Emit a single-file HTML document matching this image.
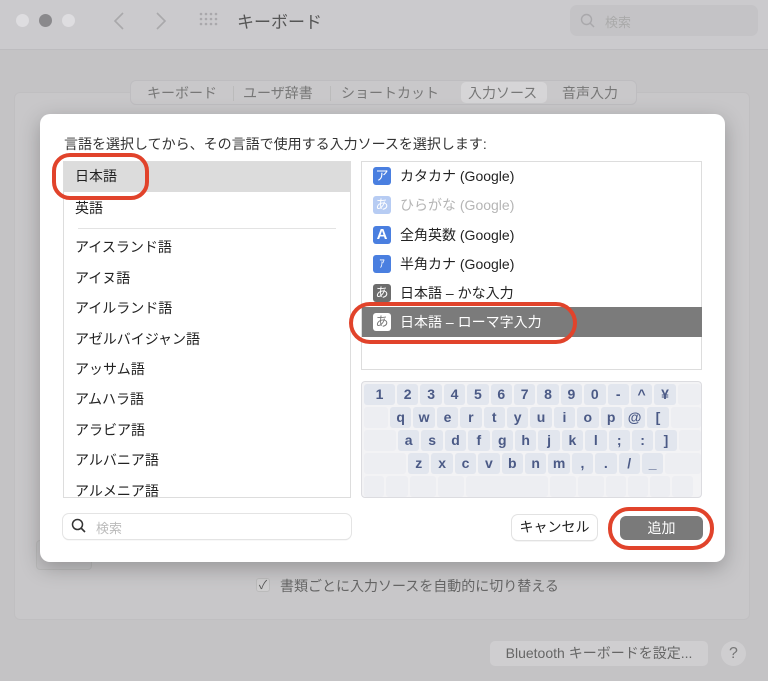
<!DOCTYPE html>
<html><head><meta charset="utf-8">
<style>
*{box-sizing:border-box;margin:0;padding:0}
body{width:768px;height:681px;overflow:hidden;position:relative;background:#c4c3c5;font-family:"Liberation Sans","Noto Sans CJK JP",sans-serif;color:#222}
.a{position:absolute}
.tl{width:13px;height:13px;border-radius:50%;top:14px}
.kb{position:absolute;left:361px;top:381px;width:341px;height:117px;background:#f3f3f5;border:1px solid #dcdce0;border-radius:4px;padding:2px}
.row{display:flex;gap:2px;height:21px;margin-bottom:2px}
.k{width:21.4px;height:21px;background:#e2e6ee;border-radius:3px;color:#4b5a86;font-weight:bold;font-size:14px;text-align:center;line-height:21px;flex:none}
.b{background:#edeef2}
.li{position:absolute;left:75px;font-size:14px;color:#222}
.ri{position:absolute;left:400px;font-size:14px;color:#222}
.ic{position:absolute;left:373px;width:18px;height:18px;border-radius:3px;color:#fff;font-size:13px;text-align:center;line-height:18px}
.ring{position:absolute;border:4px solid #e1432b;border-radius:18px}
.tab{position:absolute;top:83px;font-size:14px;color:#777}
</style></head><body>
<div class="a" style="left:0;top:0;width:768px;height:50px;background:#cbcacd;border-bottom:1px solid #bdbcbf"></div>
<div class="a tl" style="left:16px;background:#dedde0"></div>
<div class="a tl" style="left:39px;background:#8a898c"></div>
<div class="a tl" style="left:62px;background:#dedde0"></div>
<svg class="a" style="left:110px;top:10px" width="60" height="22"><path d="M13 3 L5 11 L13 19" stroke="#a9a8ab" stroke-width="1.6" fill="none"/><path d="M47 3 L55 11 L47 19" stroke="#a9a8ab" stroke-width="1.6" fill="none"/></svg>
<svg class="a" style="left:199px;top:12px" width="22" height="16" fill="#a9a8ab"><g id="g"><circle cx="2" cy="2" r="1.3"/><circle cx="7" cy="2" r="1.3"/><circle cx="12" cy="2" r="1.3"/><circle cx="17" cy="2" r="1.3"/></g><use href="#g" y="5"/><use href="#g" y="10"/></svg>
<div class="a" style="left:237px;top:8px;font-size:17px;color:#555">キーボード</div>
<div class="a" style="left:570px;top:5px;width:188px;height:31px;background:#c4c3c6;border-radius:7px"></div>
<svg class="a" style="left:580px;top:13px" width="16" height="16"><circle cx="6.5" cy="6.5" r="5" stroke="#a9a8ab" stroke-width="1.4" fill="none"/><path d="M10 10 L14 14" stroke="#a9a8ab" stroke-width="1.5"/></svg>
<div class="a" style="left:605px;top:12px;font-size:13px;color:#aaa">検索</div>
<div class="a" style="left:14px;top:92px;width:736px;height:528px;background:#c8c7c9;border-radius:6px;border:1px solid #c0bfc1"></div>
<div class="a" style="left:130px;top:80px;width:507px;height:25px;background:#c9c8ca;border-radius:6px;border:1px solid #bebdc0"></div>
<div class="a" style="left:461px;top:82px;width:86px;height:21px;background:#d6d5d7;border-radius:5px"></div>
<div class="tab" style="left:147px">キーボード</div>
<div class="a" style="left:233px;top:86px;width:1px;height:15px;background:#bbb"></div>
<div class="tab" style="left:243px">ユーザ辞書</div>
<div class="a" style="left:330px;top:86px;width:1px;height:15px;background:#bbb"></div>
<div class="tab" style="left:341px">ショートカット</div>
<div class="tab" style="left:468px">入力ソース</div>
<div class="tab" style="left:562px">音声入力</div>
<div class="a" style="left:36px;top:540px;width:56px;height:30px;background:#c4c3c5;border:1px solid #bbb;border-radius:4px"></div>
<div class="a" style="left:256px;top:578px;width:14px;height:14px;border-radius:3px;background:#cfcecf;border:1px solid #bbb;font-size:12px;line-height:12px;text-align:center;color:#555">✓</div>
<div class="a" style="left:280px;top:576px;font-size:14px;color:#666">書類ごとに入力ソースを自動的に切り替える</div>
<div class="a" style="left:490px;top:641px;width:218px;height:25px;background:#cfced0;border-radius:5px;font-size:14px;color:#666;text-align:center;line-height:25px">Bluetooth キーボードを設定...</div>
<div class="a" style="left:721px;top:641px;width:25px;height:25px;border-radius:50%;background:#cfced0;font-size:16px;color:#777;text-align:center;line-height:25px">?</div>
<div class="a" style="left:40px;top:114px;width:685px;height:448px;background:#fff;border-radius:10px;box-shadow:0 6px 20px rgba(0,0,0,.25)"></div>
<div class="a" style="left:64px;top:134px;font-size:14px;color:#333">言語を選択してから、その言語で使用する入力ソースを選択します:</div>
<div class="a" style="left:63px;top:161px;width:288px;height:337px;border:1px solid #ddd;background:#fff"></div>
<div class="a" style="left:64px;top:162px;width:286px;height:30px;background:#dcdcdc"></div>
<div class="li" style="top:166px">日本語</div>
<div class="li" style="top:198px">英語</div>
<div class="a" style="left:78px;top:228px;width:258px;height:1px;background:#e3e3e3"></div>
<div class="li" style="top:237px">アイスランド語</div>
<div class="li" style="top:268px">アイヌ語</div>
<div class="li" style="top:298px">アイルランド語</div>
<div class="li" style="top:329px">アゼルバイジャン語</div>
<div class="li" style="top:359px">アッサム語</div>
<div class="li" style="top:389px">アムハラ語</div>
<div class="li" style="top:420px">アラビア語</div>
<div class="li" style="top:450px">アルバニア語</div>
<div class="li" style="top:481px;height:16px;overflow:hidden">アルメニア語</div>
<div class="a" style="left:361px;top:161px;width:341px;height:209px;border:1px solid #ddd;background:#fff"></div>
<div class="a" style="left:362px;top:307px;width:340px;height:30px;background:#7b7b7b"></div>
<div class="ic" style="top:167px;background:#4a7fe0">ア</div><div class="ri" style="top:166px">カタカナ (Google)</div>
<div class="ic" style="top:196px;background:#b7ccf3">あ</div><div class="ri" style="top:195px;color:#b5b5b5">ひらがな (Google)</div>
<div class="ic" style="top:226px;background:#4a7fe0;font-weight:bold;font-size:15px">A</div><div class="ri" style="top:225px">全角英数 (Google)</div>
<div class="ic" style="top:255px;background:#4a7fe0;font-size:11px">ｱ</div><div class="ri" style="top:254px">半角カナ (Google)</div>
<div class="ic" style="top:284px;background:#6d6d6d">あ</div><div class="ri" style="top:283px">日本語 – かな入力</div>
<div class="ic" style="top:313px;background:#fff;color:#777">あ</div><div class="ri" style="top:312px;color:#fff">日本語 – ローマ字入力</div>
<div class="kb">
<div class="row"><div class="k" style="width:31px">1</div><div class="k">2</div><div class="k">3</div><div class="k">4</div><div class="k">5</div><div class="k">6</div><div class="k">7</div><div class="k">8</div><div class="k">9</div><div class="k">0</div><div class="k">-</div><div class="k">^</div><div class="k">¥</div><div class="k b" style="width:23px"></div></div>
<div class="row"><div class="k b" style="width:24px"></div><div class="k">q</div><div class="k">w</div><div class="k">e</div><div class="k">r</div><div class="k">t</div><div class="k">y</div><div class="k">u</div><div class="k">i</div><div class="k">o</div><div class="k">p</div><div class="k">@</div><div class="k">[</div><div class="k b" style="width:30px"></div></div>
<div class="row"><div class="k b" style="width:32px"></div><div class="k">a</div><div class="k">s</div><div class="k">d</div><div class="k">f</div><div class="k">g</div><div class="k">h</div><div class="k">j</div><div class="k">k</div><div class="k">l</div><div class="k">;</div><div class="k">:</div><div class="k">]</div><div class="k b" style="width:22px"></div></div>
<div class="row"><div class="k b" style="width:42px"></div><div class="k">z</div><div class="k">x</div><div class="k">c</div><div class="k">v</div><div class="k">b</div><div class="k">n</div><div class="k">m</div><div class="k">,</div><div class="k">.</div><div class="k">/</div><div class="k">_</div><div class="k b" style="width:36px"></div></div>
<div class="row"><div class="k b" style="width:20px"></div><div class="k b" style="width:22px"></div><div class="k b" style="width:26px"></div><div class="k b" style="width:26px"></div><div class="k b" style="width:82px"></div><div class="k b" style="width:26px"></div><div class="k b" style="width:26px"></div><div class="k b" style="width:20px"></div><div class="k b" style="width:20px"></div><div class="k b" style="width:20px"></div><div class="k b" style="width:21px"></div></div>
</div>
<div class="a" style="left:63px;top:514px;width:288px;height:25px;border-radius:6px;background:#fff;box-shadow:0 0 0 1px #e4e4e4,0 1px 1px #ccc"></div>
<svg class="a" style="left:71px;top:518px" width="16" height="16"><circle cx="6.5" cy="6.5" r="5" stroke="#333" stroke-width="1.5" fill="none"/><path d="M10 10 L14 14" stroke="#333" stroke-width="1.6"/></svg>
<div class="a" style="left:96px;top:518px;font-size:13px;color:#bbb">検索</div>
<div class="a" style="left:512px;top:515px;width:85px;height:25px;border-radius:6px;background:#fff;box-shadow:0 0 0 1px #e2e2e2,0 1px 1px #bbb;font-size:14px;text-align:center;line-height:25px">キャンセル</div>
<div class="a" style="left:620px;top:516px;width:83px;height:24px;border-radius:6px;background:#7a7a7a;font-size:14px;color:#fff;text-align:center;line-height:24px">追加</div>
<div class="ring" style="left:52px;top:153px;width:97px;height:47px"></div>
<div class="ring" style="left:349px;top:302px;width:228px;height:42px;border-radius:21px"></div>
<div class="ring" style="left:608px;top:507px;width:106px;height:43px;border-radius:21px"></div>
</body></html>
